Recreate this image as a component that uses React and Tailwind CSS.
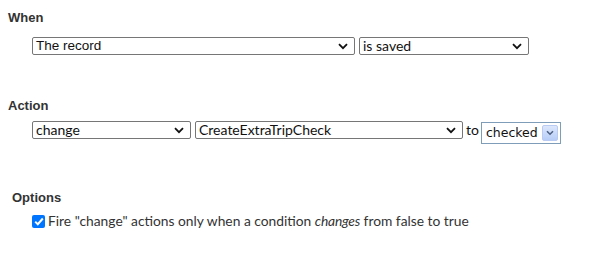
import React from 'react';

const Chevron = () => (
  <svg width="10" height="7" viewBox="0 0 10 7" className="shrink-0">
    <path d="M1 1.2 L5 5.2 L9 1.2" fill="none" stroke="#111" strokeWidth="1.8" />
  </svg>
);

function Select({ value, width, font = 'lato' }) {
  return (
    <div
      className={`flex items-center justify-between h-[18px] border border-[#767676] rounded-[2px] bg-white pl-[3px] pr-[6px] leading-[16px] text-[#111] ${font === 'arial' ? "font-['Liberation_Sans',Arial,sans-serif] text-[13.5px]" : "font-['Lato',sans-serif] text-[14px]"}`}
      style={{ width }}
    >
      <span className="whitespace-nowrap">{value}</span>
      <Chevron />
    </div>
  );
}

export default function App() {
  return (
    <div className="w-[603px] h-[262px] bg-white relative font-['Liberation_Sans',Arial,sans-serif] text-[#222]">
      <div className="pl-[8px] pt-[10px]">
        <h2 className="text-[13px] font-bold leading-[16px] text-[#333]">When</h2>
        <div className="flex gap-[4px] pl-[24px] mt-[11px]">
          <Select value="The record" width={323} font="arial" />
          <Select value="is saved" width={170} />
        </div>

        <h2 className="text-[13px] font-bold leading-[16px] text-[#333] mt-[43px]">Action</h2>
        <div className="flex items-start pl-[24px] mt-[7px]">
          <Select value="change" width={159} />
          <div className="w-[4px]" />
          <Select value="CreateExtraTripCheck" width={268} />
          <span className="font-['Lato',sans-serif] text-[14px] leading-[18px] pl-[3px] pr-[2px] text-[#111]">to</span>
          <div className="flex items-center w-[80px] h-[22px] border border-[#7f9db9] bg-white mt-[1px] pl-[4px] pr-[2px] justify-between">
            <span className="font-['DejaVu_Sans',Verdana,sans-serif] text-[12.5px] leading-none text-[#111]">checked</span>
            <div className="w-[16px] h-[16px] rounded-[2px] border border-[#b9cbf2] bg-gradient-to-b from-[#dde7fc] to-[#b7cdf7] flex items-center justify-center">
              <svg width="8" height="6" viewBox="0 0 8 6">
                <path d="M1 1.2 L4 4.2 L7 1.2" fill="none" stroke="#4d6185" strokeWidth="1.6" />
              </svg>
            </div>
          </div>
        </div>

        <div className="pl-[4px] mt-[46px]">
          <h2 className="text-[13px] font-bold leading-[16px] text-[#333]">Options</h2>
          <label className="flex items-center pl-[20px] mt-[6px] font-['Lato',sans-serif] text-[13.8px] text-[#333] leading-[18px]">
            <span className="w-[13px] h-[13px] rounded-[2px] bg-[#0075ff] flex items-center justify-center mr-[3px]">
              <svg width="10" height="9" viewBox="0 0 10 9">
                <path d="M1.2 4.6 L3.8 7.2 L8.8 1.5" fill="none" stroke="#fff" strokeWidth="2" />
              </svg>
            </span>
            <span>Fire "change" actions only when a condition <i className="tracking-[-0.2px]">changes</i> from false to true</span>
          </label>
        </div>
      </div>
    </div>
  );
}
